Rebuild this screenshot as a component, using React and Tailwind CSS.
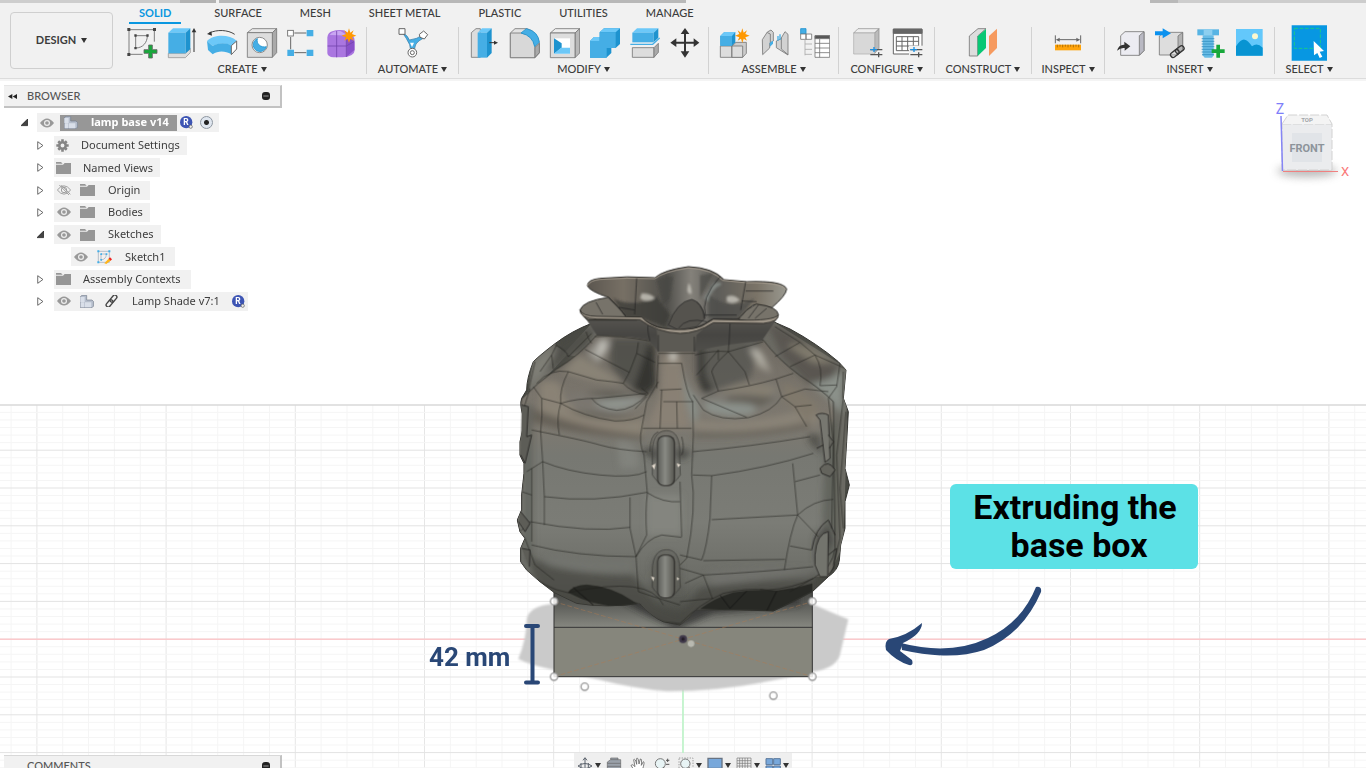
import { useState } from 'react';

const BLUE = '#45aee5';
const DEEP = '#1e93cf';
const EDGE = '#666666';

const Plus = ({ x, y }) => (
  <path d={`M${x} ${y}h11v14h14v11h-14v14h-11v-14h-14v-11h14z`} fill="#17a83b" />
);

const Spark = ({ x, y }) => (
  <path
    transform={`translate(${x} ${y})`}
    d="M0-22 4-9 14-16 9-5 22 0 9 5 14 15 4 9 0 22-4 9-14 15-9 5-22 0-9-5-14-16-4-9z"
    fill="#ff9800"
  />
);

const Sliders = ({ x, y }) => (
  <g transform={`translate(${x} ${y})`} fill="none" strokeWidth="4">
    <path d="M0 8h36M0 23h36M25 16v15" stroke="#555" />
    <path d="M0 8h20M11 0v15" stroke="#1b8fe0" />
  </g>
);

const groups = [
  {
    name: 'CREATE',
    size: 'px-2',
    tools: [
      ['Create Sketch', '378 81 96 96', (
        <g fill="none" stroke={EDGE} strokeWidth="2.5">
          <path d="M387 89H463V125M387 89V163H428" />
          <path d="M407 107h35M407 107v37M442 107c0 20-13 37-35 37" />
          <path d="M382 84h9v9h-9zM459 84h9v9h-9zM382 159h9v9h-9zM403 103h7v7h-7zM439 103h7v7h-7zM403 141h7v7h-7z" fill="#444" stroke="none" />
          <Plus x={446} y={135} />
        </g>
      )],
      ['Extrude', '498 81 96 96', (
        <g>
          <path d="M505 160h51l15-14v12l-15 15h-51z" fill="#ddd" stroke="#888" strokeWidth="2" />
          <path d="M505 98 519 85H571L557 98z" fill="#6cc8f8" />
          <path d="M505 98H557V160H505z" fill={BLUE} />
          <path d="M557 98 571 85V147L557 160z" fill={DEEP} />
          <path d="M582 156V92" stroke="#333" strokeWidth="3" />
          <path d="M582 84l7 13h-14z" fill="#333" />
        </g>
      )],
      ['Revolve', '618 81 96 96', (
        <g>
          <path d="M628 99C650 88 684 89 704 103" stroke="#444" strokeWidth="3" fill="none" />
          <path d="M621 102l13-8 2 13z" fill="#333" />
          <path d="M621 123C641 102 688 102 710 122L696 137C676 128 656 128 638 138z" fill="#6cc8f8" />
          <path d="M621 123 638 138V163L624 150zM638 138C656 127 680 128 694 137V163C675 152 654 152 638 163z" fill={BLUE} />
          <path d="M694 137 710 123V147L694 164z" fill="#fff" stroke={EDGE} strokeWidth="3" />
        </g>
      )],
      ['Hole', '738 81 96 96', (
        <g stroke="#777" strokeWidth="2.5" strokeLinejoin="round">
          <path d="M742 98 757 86H830L817 98z" fill="#e8e8e8" />
          <path d="M817 98 830 86V158L817 172z" fill="#aaa" />
          <path d="M742 98H817V172H742z" fill="#ddd" />
          <circle cx="779" cy="135" r="23" fill="#fff" />
          <path d="M772 116a20 20 0 1 0 27 24c-16 4-31-8-27-24z" fill={BLUE} stroke={DEEP} />
        </g>
      )],
      ['Pattern', '858 81 96 96', (
        <g>
          <path d="M883 99h36M872 111v37M883 158h36" stroke={EDGE} strokeWidth="3" />
          <rect x="863" y="91" width="17" height="17" fill="#fff" stroke={EDGE} strokeWidth="2.5" />
          <path d="M920 90h20v19h-20zM862 149h20v19h-20zM920 149h20v19h-20z" fill={BLUE} />
        </g>
      )],
      ['Create Form', '978 81 96 96', (
        <g>
          <path d="M982 112q2-15 15-18 15-6 35-3l27 18q6 5 5 14v28q0 9-9 14-12 7-27 7h-28q-16-1-18-12z" fill="#aa76e0" />
          <path d="M989 105q10-14 32-12l25 14q-28-2-57-2z" fill="#c9a6f2" />
          <path d="M1040 110q18 5 23 15v25l-23 20z" fill="#8950c9" />
          <path d="M1010 93v79M1039 108v63M983 138h56l23-13" stroke="#7544ad" strokeWidth="2.5" fill="none" />
          <Spark x={1047} y={107} />
        </g>
      )],
    ],
  },
  {
    name: 'AUTOMATE',
    size: 'w-[92px]',
    tools: [
      ['Automated Modeling', '1188 81 96 96', (
        <g>
          <path d="M1203 96Q1222 108 1225 120 1248 118 1268 103L1273 111Q1250 123 1245 132 1239 142 1242 160H1226Q1230 146 1226 134 1217 115 1203 96z" fill={BLUE} stroke="#3279a5" strokeWidth="2" />
          <path d="M1227 128h12l-6 13z" fill="#fff" />
          <path d="M1194 86h18v17h-18zM1255 103l13-10 12 11-10 13-13-5z" fill="#fff" stroke={EDGE} strokeWidth="3" />
          <circle cx="1234" cy="158" r="13" fill="#fff" stroke={EDGE} strokeWidth="3" />
          <circle cx="1234" cy="158" r="6" fill="#fff" stroke={EDGE} strokeWidth="3" />
        </g>
      )],
    ],
  },
  {
    name: 'MODIFY',
    size: 'w-[250px]',
    tools: [
      ['Press Pull', '36 81 96 96', (
        <g>
          <path d="M46 98 60 86H73V172H46z" fill="#ddd" stroke="#777" strokeWidth="2.5" />
          <path d="M65 98 78 85H107L93 98z" fill="#6cc8f8" />
          <path d="M65 98H93V173H65z" fill={BLUE} />
          <path d="M93 98 107 85V159L93 173z" fill={DEEP} />
          <path d="M100 128h17" stroke="#333" strokeWidth="3" />
          <path d="M126 128l-12-6v12z" fill="#333" />
        </g>
      )],
      ['Fillet', '156 81 96 96', (
        <g stroke="#777" strokeWidth="2.5" strokeLinejoin="round">
          <path d="M163 99 177 86H213Q247 95 251 135V158L237 173H163z" fill="#e3e3e3" />
          <path d="M163 99h32Q233 104 237 140v33h-74z" fill="#d8d8d8" />
          <path d="M195 99 211 86Q247 94 250 127L236 140Q230 107 195 99z" fill={BLUE} stroke={DEEP} />
          <path d="M237 142l13-12v28l-13 14z" fill="#a9a9a9" />
        </g>
      )],
      ['Shell', '276 81 96 96', (
        <g stroke="#777" strokeWidth="2.5" strokeLinejoin="round">
          <path d="M283 99 298 86H371L357 99z" fill="#eee" />
          <path d="M357 99 371 86V159L357 173z" fill="#b8b8b8" />
          <path d="M283 99H357V173H283z" fill="#ddd" />
          <path d="M294 115H342V161H294z" fill="#fff" stroke="none" />
          <path d="M294 115 317 130V143L294 161z" fill={DEEP} stroke="none" />
          <path d="M294 161 315 143H342V161z" fill="#6cc8f8" stroke="none" />
        </g>
      )],
      ['Combine', '396 81 96 96', (
        <g>
          <path d="M402 123 414 111H431V97L444 85H492V132L479 144H466V159L451 173H402z" fill={DEEP} />
          <path d="M431 97 444 85H492L479 97zM402 123 414 111H431V123z" fill="#6cc8f8" />
          <path d="M431 97H479V144H452V173H402V123H431z" fill={BLUE} />
        </g>
      )],
      ['Split Body', '516 81 96 96', (
        <g>
          <path d="M529 98 543 85H607L593 98z" fill="#6cc8f8" />
          <path d="M529 98H593V127H529z" fill={BLUE} />
          <path d="M593 98 607 85V113L593 127z" fill={DEEP} />
          <path d="M523 133H590L611 114" stroke={BLUE} strokeWidth="4" fill="none" />
          <path d="M529 143H594V172H529z" fill="#ddd" stroke="#777" strokeWidth="2.5" />
          <path d="M594 143 607 130V157L594 172z" fill="#aaa" stroke="#777" strokeWidth="2.5" />
        </g>
      )],
      ['Move', '636 81 96 96', (
        <path d="M687 84 700 102H690V125H713V115L730 128 713 141V131H690V154H700L687 173 674 154H684V131H661V141L643 128 661 115V125H684V102H674z" fill="#333" />
      )],
    ],
  },
  {
    name: 'ASSEMBLE',
    size: 'w-[130px]',
    tools: [
      ['New Component', '786 81 96 96', (
        <g stroke="#777" strokeWidth="2.5" strokeLinejoin="round">
          <path d="M793 138H828V172H793z" fill="#ddd" />
          <path d="M828 138 840 127H871V160L860 172H828z" fill="#ccc" />
          <path d="M828 138H860V172H828z" fill="#ddd" />
          <path d="M793 108 805 96H838V127L828 137H793z" fill={DEEP} stroke="none" />
          <path d="M793 108 805 96H838L828 108z" fill="#6cc8f8" stroke="none" />
          <path d="M793 108H828V137H793z" fill={BLUE} stroke="none" />
          <g stroke="none"><Spark x={859} y={107} /></g>
        </g>
      )],
      ['Joint', '906 81 96 96', (
        <g stroke="#777" strokeWidth="2.5" strokeLinejoin="round">
          <path d="M919 119 934 96 945 90 952 97V123L941 130V144L920 164z" fill="#d2d2d2" />
          <path d="M934 98 943 102V130" fill="none" />
          <path d="M941 128l10-6v9l-9 9z" fill={BLUE} stroke="none" />
          <path d="M961 123 974 117 987 95 996 103V165L961 143z" fill="#d2d2d2" />
          <path d="M976 114v33l20 17" fill="none" />
          <path d="M966 108v14M972 103v17" stroke={BLUE} strokeWidth="4" />
        </g>
      )],
      ['Bill of Materials', '1026 81 96 96', (
        <g stroke="#777" strokeWidth="2.5">
          <path d="M1034 86h16v16h-16z" fill={BLUE} stroke={DEEP} />
          <path d="M1034 102h16v16h-16zM1050 102h17v16h-17z" fill="#fff" />
          <path d="M1047 118v48M1047 132h21M1047 148h21M1047 163h21" fill="none" stroke="#aaa" />
          <path d="M1077 107h44v65h-44z" fill="#fff" />
          <path d="M1077 107h44v9h-44z" fill="#555" />
          <path d="M1091 116v56M1077 130h44M1077 144h44M1077 158h44" />
        </g>
      )],
    ],
  },
  {
    name: 'CONFIGURE',
    size: 'w-[96px]',
    tools: [
      ['Configure', '1185 81 96 96', (
        <g strokeWidth="2" strokeLinejoin="round">
          <path d="M1193 99 1206 86H1269L1256 99z" fill="#eee" stroke="#888" />
          <path d="M1256 99 1269 86V145L1256 160z" fill="#bbb" stroke="#888" />
          <path d="M1193 99H1256V162H1193z" fill="#d8d8d8" stroke="#aaa" />
          <Sliders x={1243} y={141} />
        </g>
      )],
      ['Configuration Table', '1305 81 96 96', (
        <g stroke={EDGE} strokeWidth="3">
          <path d="M1312 88h86v74h-86z" fill="#fff" />
          <path d="M1312 87h86v13h-86z" fill={EDGE} />
          <path d="M1321 110h67v42h-67zM1321 124h67M1321 138h67M1338 110v42M1355 110v42M1372 110v42" fill="none" />
          <path d="M1359 137h42v40h-42z" fill="#f1f1f1" stroke="none" />
          <Sliders x={1363} y={141} />
        </g>
      )],
    ],
  },
  {
    name: 'CONSTRUCT',
    size: 'w-[97px]',
    tools: [
      ['Offset Plane', '171 81 96 96', (
        <g>
          <path d="M178 108 204 86H228L203 108V168H178z" fill="#ddd" stroke="#777" strokeWidth="2.5" />
          <path d="M203 109 228 87V144L203 168z" fill="#08c774" />
          <path d="M237 108 261 86V144L237 168z" fill="#f69a5f" />
        </g>
      )],
    ],
  },
  {
    name: 'INSPECT',
    size: 'w-[73px]',
    tools: [
      ['Measure', '426 81 96 96', (
        <g>
          <path d="M436 106v24M512 106v24M440 119h68" stroke={EDGE} strokeWidth="3" />
          <path d="M438 119l11-6v12zM510 119l-11-6v12z" fill={EDGE} />
          <path d="M435 134h78v17h-78z" fill="#ffa40b" />
          <path d="M442 134v8M450 134v6M458 134v8M466 134v6M474 134v8M482 134v6M490 134v8M498 134v6M506 134v8" stroke="#865500" strokeWidth="2" />
        </g>
      )],
    ],
  },
  {
    name: 'INSERT',
    size: 'w-[170px]',
    tools: [
      ['Insert Derive', '612 81 96 96', (
        <g stroke="#777" strokeWidth="2.5" strokeLinejoin="round">
          <path d="M632 107 645 95H702V152L688 166H632z" fill="#ececf2" />
          <path d="M688 107 702 95V152L688 166z" fill="#b9b9c3" />
          <path d="M621 152Q626 133 643 134V125L661 139 644 152V144Q632 142 621 152z" fill="#333" stroke="none" />
        </g>
      )],
      ['Insert Component', '732 81 96 96', (
        <g stroke="#777" strokeWidth="2.5" strokeLinejoin="round">
          <path d="M748 108 762 97H818V148L804 165H748z" fill="#ddd" />
          <path d="M804 108 818 97V148L804 165z" fill="#b3b3b3" />
          <path d="M735 94H758V85L783 100 758 115V106H735z" fill="#0a91ef" stroke="none" />
          <g fill="none" stroke="#333" strokeWidth="4" transform="rotate(-38 802 154)">
            <rect x="778" y="147" width="28" height="15" rx="7" />
            <rect x="797" y="147" width="28" height="15" rx="7" />
          </g>
        </g>
      )],
      ['Insert Fastener', '852 81 96 96', (
        <g>
          <path d="M862 88h65v18h-65z" fill="#57b4e4" />
          <path d="M881 88h26v18h-26z" fill="#8ccff0" />
          <path d="M878 106h33v60l-5 7h-22l-6-7z" fill="#68bce6" />
          <path d="M875 116h38M875 124h38M875 132h38M875 140h38M875 148h38M875 156h38M876 164h36" stroke="#328fc0" strokeWidth="2.5" />
          <Plus x={919} y={134} />
        </g>
      )],
      ['Canvas', '972 81 96 96', (
        <g>
          <path d="M978 87h80v80h-80z" fill="#63c8fb" />
          <circle cx="1035" cy="109" r="9" fill="#fdf8ce" />
          <path d="M978 139Q992 117 1004 119 1013 120 1026 139 1041 126 1058 143V167H978z" fill="#0894d2" />
        </g>
      )],
    ],
  },
];

const SelectIcon = (
  <g>
    <path d="M1145 76h106v106h-106z" fill="#0797e2" />
    <path d="M1153 85h78v60h-78z" fill="none" stroke="#17c98c" strokeWidth="3" strokeDasharray="11 5" />
    <path d="M1211 123 1242 153 1229 155 1237 170 1229 174 1222 159 1212 166z" fill="#fff" />
  </g>
);

const Caret = ({ className = 'ml-[3px]' }) => (
  <svg viewBox="0 0 6 5" className={`inline-block w-[6px] h-[5px] shrink-0 ${className}`} aria-hidden="true">
    <path d="M0 0H6L3 5z" fill="#333" />
  </svg>
);

function ToolGroup({ name, size, tools }) {
  return (
    <div className={`${size} h-[47px] shrink-0 flex flex-col items-center border-r border-[#d2d2d2] box-border`}>
      <div className="flex gap-2 h-8">
        {tools.map(([label, box, art]) => (
          <button key={label} type="button" aria-label={label} className="w-8 h-8">
            <svg viewBox={box} className="w-8 h-8">{art}</svg>
          </button>
        ))}
      </div>
      <button type="button" className="mt-[2px] h-4 flex items-center whitespace-nowrap text-[11px] leading-4">
        {name}
        <Caret />
      </button>
    </div>
  );
}

function Toolbar() {
  const [tab, setTab] = useState('SOLID');
  const tabs = ['SOLID', 'SURFACE', 'MESH', 'SHEET METAL', 'PLASTIC', 'UTILITIES', 'MANAGE'];
  return (
    <header className="relative z-10 bg-[#f1f1f1] border-b-2 border-[#f4f4f4] text-[#3c3c3c] font-[Lato,'Open_Sans',sans-serif] font-medium">
      <div className="flex h-[3px]">
        <div className="w-[180px] bg-[#cdcdcd]" />
        <div className="w-9 bg-[#b3b3b3] mr-[3px]" />
        <div className="w-[467px] bg-[#b8b8b8]" />
        <div className="w-[464px]" />
        <div className="w-7 bg-[#b9b9b9]" />
        <div className="flex-1 bg-[#cdcdcd]" />
      </div>
      <div className="flex h-[76px] border-b border-[#dcdcdc]">
        <button
          type="button"
          className="ml-[10px] mt-[9px] w-[103px] h-[57px] shrink-0 rounded border border-[#cfcfcf] text-[11px] font-bold flex items-center justify-center gap-[2px]"
        >
          DESIGN
          <Caret />
        </button>
        <div className="flex-1 ml-[5px]">
          <nav className="flex gap-[38px] ml-[21px] h-[22px] text-[11px]">
            {tabs.map((t) => (
              <button
                key={t}
                type="button"
                onClick={() => setTab(t)}
                className={
                  t === tab
                    ? 'relative mr-[5px] text-[#0a97e0] font-bold h-[21px] after:absolute after:-left-[10px] after:-right-[10px] after:bottom-0 after:h-[2px] after:bg-[#0a97e0]'
                    : 'h-[21px] whitespace-nowrap'
                }
              >
                {t}
              </button>
            ))}
          </nav>
          <div className="flex mt-[2px]">
            {groups.map((g) => (
              <ToolGroup key={g.name} {...g} />
            ))}
            <div className="w-[68px] h-[47px] shrink-0 flex flex-col items-center">
              <button type="button" aria-label="Select" className="w-9 h-9 -my-[2px] shrink-0">
                <svg viewBox="1143 75 108 108" className="w-9 h-9">{SelectIcon}</svg>
              </button>
              <button type="button" className="mt-[2px] h-4 flex items-center text-[11px] leading-4">
                SELECT
                <Caret />
              </button>
            </div>
          </div>
        </div>
      </div>
    </header>
  );
}

const Eye = ({ off }) => (
  <svg viewBox="0 0 42 30" className="w-[14px] h-[10px] shrink-0" aria-hidden="true">
    {off ? (
      <g fill="none" stroke="#a0a0a0" strokeWidth="3">
        <path d="M1 15Q21-10 41 15 21 40 1 15z" />
        <circle cx="21" cy="15" r="8" />
        <path d="M7 0 36 30M13 0 40 28" />
      </g>
    ) : (
      <g>
        <path d="M0 15Q21-12 42 15 21 42 0 15z" fill="#999" />
        <circle cx="21" cy="15" r="9" fill="#eee" />
        <circle cx="21" cy="15" r="5.5" fill="#999" />
      </g>
    )}
  </svg>
);

const Folder = () => (
  <svg viewBox="0 0 45 36" className="w-[15px] h-3 shrink-0" aria-hidden="true">
    <path d="M0 0H15L20 5H0zM0 8H21L26 3H45V36H0z" fill="#969696" />
  </svg>
);

const Gear = () => (
  <svg viewBox="-20 -20 40 40" className="w-[13px] h-[13px] shrink-0" aria-hidden="true">
    <circle r="10" fill="none" stroke="#858585" strokeWidth="8" />
    <path d="M0-19V-12M0 12V19M-19 0H-12M12 0H19M-13-13-9-9M9 9 13 13M-13 13-9 9M9-9 13-13" stroke="#858585" strokeWidth="8" />
  </svg>
);

const Component = () => (
  <svg viewBox="0 0 42 39" className="w-[14px] h-[13px] shrink-0" aria-hidden="true">
    <path d="M1 5 6 1H20V15H36L41 20V33L36 38H1z" fill="#b5bdcb" stroke="#747d8c" strokeWidth="2" />
    <path d="M1 6H14V21H1zM15 22H34V37H15zM2 22H13V37H2z" fill="#d9dfe9" />
  </svg>
);

const Link = () => (
  <svg viewBox="0 0 38 34" className="w-[13px] h-[12px] shrink-0 mx-[2px]" aria-hidden="true">
    <g fill="none" stroke="#444" strokeWidth="4" transform="rotate(-50 19 17)">
      <rect x="-2" y="11" width="24" height="12" rx="6" />
      <rect x="16" y="11" width="24" height="12" rx="6" />
    </g>
  </svg>
);

const SketchIcon = () => (
  <svg viewBox="0 0 45 42" className="w-[15px] h-[14px] shrink-0" aria-hidden="true">
    <path d="M4 4H37V37H4zM12 12H28M12 12V30Q28 28 28 12" fill="none" stroke="#96a4b5" strokeWidth="2" />
    <path d="M1 1h6v6H1zM34 1h6v6h-6zM1 34h6v6H1zM10 10h5v5h-5zM26 10h5v5h-5zM10 27h5v5h-5z" fill="#42afe9" />
    <path d="M22 40 36 25 42 31 28 42z" fill="#ffb51b" />
    <path d="M35 26 39 22 45 28 41 32z" fill="#e22" />
  </svg>
);

const Release = () => (
  <svg viewBox="0 0 40 40" className="w-[13px] h-[13px] shrink-0" aria-hidden="true">
    <circle cx="19" cy="19" r="19" fill="#3d55b4" />
    <text x="18" y="28" fontSize="26" fontWeight="700" textAnchor="middle" fill="#fff" fontFamily="Roboto, sans-serif">R</text>
    <circle cx="33" cy="33" r="5" fill="#eee" stroke="#555" strokeWidth="2" />
  </svg>
);

const Expander = ({ open }) => (
  <button type="button" aria-label={open ? 'Collapse' : 'Expand'} className="w-2 h-[19px] flex items-center justify-center shrink-0">
    <svg viewBox="0 0 20 26" className="w-[7px] h-[9px]">
      {open ? (
        <path d="M19 3V22H0z" fill="#444" stroke="#111" strokeWidth="2" />
      ) : (
        <path d="M2 2 17 13 2 24z" fill="#fff" stroke="#555" strokeWidth="2.5" />
      )}
    </svg>
  </button>
);

const rows = [
  { name: 'Document Settings', icons: <Gear />, pad: 'gap-3 pl-[2px] pr-[7px]' },
  { name: 'Named Views', icons: <Folder />, pad: 'gap-3 pl-[2px] pr-[7px]' },
  { name: 'Origin', eye: 'off', icons: <Folder />, pad: 'gap-[13px] pl-[3px] pr-[10px]' },
  { name: 'Bodies', eye: 'on', icons: <Folder />, pad: 'gap-[13px] pl-[3px] pr-[7px]' },
  { name: 'Sketches', eye: 'on', icons: <Folder />, pad: 'gap-[13px] pl-[3px] pr-[7px]', open: true },
  { name: 'Sketch1', eye: 'on', icons: <SketchIcon />, pad: 'gap-[13px] pl-[3px] pr-[10px]', leaf: true },
  { name: 'Assembly Contexts', icons: <Folder />, pad: 'gap-3 pl-[2px] pr-[10px]' },
  { name: 'Lamp Shade v7:1', eye: 'on', icons: <><Component /><Link /></>, pad: 'gap-3 pl-[3px] pr-[3px]', release: true },
];

function Browser() {
  return (
    <aside className="ml-1 mt-1 w-[278px] text-[11px] text-[#3d3d3d] font-['Noto_Sans','Open_Sans',sans-serif]">
      <div className="h-[23px] bg-[#f1f1f1] border-r-2 border-b-2 border-t border-t-[#e6e6e6] border-[#c2c2c2] flex items-center pl-1 pr-[10px] text-[#555]">
        <button type="button" aria-label="Collapse panel" className="mr-[10px]">
          <svg viewBox="0 0 27 15" className="w-[9px] h-[5px]">
            <path d="M13 0V15L0 7.5zM27 0V15L14 7.5z" fill="#222" />
          </svg>
        </button>
        <span className="flex-1 font-[Lato,sans-serif] font-medium">BROWSER</span>
        <Minus />
      </div>

      <div className="mt-[5px] ml-4 flex items-center gap-[9px]">
        <Expander open />
        <div className="h-[19px] bg-[#f1f1f1] flex items-center pl-[3px] pr-[6px]">
          <Eye />
          <div className="ml-[6px] mr-[3px] h-4 bg-[#979797] text-white font-bold flex items-center pl-1 pr-2 gap-[13px]">
            <Component />
            <span>lamp base v14</span>
          </div>
          <Release />
          <input
            type="radio"
            defaultChecked
            aria-label="Activate lamp base v14"
            className="appearance-none ml-[7px] w-[13px] h-[13px] rounded-full border border-[#8b949f] bg-[radial-gradient(circle,#222_0_2px,#dfe6ef_3px)]"
          />
        </div>
      </div>

      <ul className="mt-1 ml-8 h-[175px] flex flex-col justify-between">
        {rows.map((row) => (
          <li key={row.name} className="flex items-center gap-[10px]">
            {row.leaf ? <span className="w-[25px]" /> : <Expander open={row.open} />}
            <div className={`h-[19px] bg-[#f1f1f1] flex items-center whitespace-nowrap ${row.pad}`}>
              <div className="flex items-center gap-[9px]">
                {row.eye && <Eye off={row.eye === 'off'} />}
                {row.icons}
              </div>
              <span>{row.name}</span>
              {row.release && <Release />}
            </div>
          </li>
        ))}
      </ul>
    </aside>
  );
}

const Minus = () => (
  <button type="button" aria-label="Panel options" className="flex items-center">
    <svg viewBox="0 0 24 24" className="w-2 h-2">
      <rect width="24" height="24" rx="9" fill="#222" />
      <path d="M4 12H20" stroke="#999" strokeWidth="3" />
    </svg>
  </button>
);

// Horizontal and vertical lines of the ground plane
const xs = Array.from({ length: 54 }, (_, i) => ({ at: 36.9 + (i - 1) * 25.84, major: (i - 1) % 5 === 0 }));
const ys = Array.from({ length: 48 }, (_, i) => ({ at: 412.4 + i * 7.56, major: i > 0 && i % 5 === 0 }));

function Ground() {
  return (
    <g>
      {xs.map((l) => (
        <path key={l.at} d={`M${l.at} 405V768`} stroke={l.major ? '#e6e6e6' : '#f5f5f5'} />
      ))}
      {ys.map((l) => (
        <path key={l.at} d={`M0 ${l.at}H1366`} stroke={l.major ? '#e3e3e3' : '#f5f5f5'} />
      ))}
      <path d="M0 405H1366" stroke="#d8d8d8" strokeWidth="1.5" />
      <path d="M0 639.3H1366" stroke="#fbc9cc" strokeWidth="1.5" />
      <path d="M683 676V768" stroke="#b9f5c4" strokeWidth="1.5" />
    </g>
  );
}

const BODY =
  'M275 205Q215 228 165 266 120 300 100 320 80 370 80 405L65 430Q58 450 70 485L68 525 60 560V600L72 625V655L65 720V765L52 795 60 830 75 850 62 880V920L80 945 120 980 162 1012 230 1045Q320 1060 420 1045 455 1085 490 1100L540 1110Q570 1090 585 1065 700 1062 820 1068L880 1040 937 1010 985 965Q1015 945 1018 915L1022 870 1035 820V740L1048 690 1035 640 1040 560 1045 470 1030 430 1038 345 1015 320Q950 265 870 222L820 200z';

const FRONT =
  'M290 240Q240 300 170 342 110 385 65 432 60 455 70 485L68 525 60 560V600L72 625V655L65 720V765L52 795 60 830 75 850 62 880V920L80 945Q130 1000 205 1013 215 993 260 990 335 995 400 1040 450 1085 490 1100L540 1106Q600 1045 670 1015 740 998 800 1005 880 1000 940 970 1000 935 1005 880L1000 440Q960 400 900 362 830 310 790 255z';

// Soft light and dark areas of the bag: [shape, colour, opacity]
const shades = [
  ['M170 265Q230 225 285 215L265 270 170 340 130 350z', '#4b4a45', 0.8],
  ['M100 325Q130 295 170 275L150 330 90 395z', '#83827a', 0.8],
  ['M800 205Q880 230 935 275L1010 330 990 390 930 390 850 310z', '#55534c', 0.8],
  ['M860 270Q920 255 1000 325L940 325z', '#8b8475', 0.8],
  ['M930 385Q990 380 1030 345L1025 480 985 430z', '#8b918a', 1],
  ['M330 250H455L465 390Q440 420 400 405L370 380 330 330z', '#4c4c48', 0.85],
  ['M600 235H785L770 300 750 370 680 395 620 420 595 370z', '#555551', 0.8],
  ['M445 270 465 260 470 390 440 425 400 405z', '#2c2d2a', 0.75],
  ['M590 265 612 280 615 360 640 410 615 430 592 370z', '#2c2d2a', 0.75],
  ['M235 300Q310 340 365 385 280 385 190 350z', '#928a7c', 0.7],
  ['M300 250Q335 245 330 270L295 325 262 295z', '#a3a19a', 0.9],
  ['M745 280Q770 270 790 300L815 355 775 335z', '#aaa69b', 0.8],
  ['M304 258Q320 260 312 290L294 312z', '#dad8d1', 0.8],
  ['M757 285Q770 282 780 300L800 340z', '#dad8d1', 0.7],
  ['M120 385Q190 360 190 430L290 480 430 490 430 545 270 530 120 470z', '#8c8477', 0.9],
  ['M190 425Q280 405 370 400L440 425Q370 495 300 490 230 480 190 425z', '#7a7770', 0.9],
  ['M250 415Q340 400 410 418L330 430z', '#55524a', 0.7],
  ['M280 440Q340 430 435 430 400 462 345 465 300 462 280 440z', '#979e98', 0.75],
  ['M200 465Q290 505 430 490', '#5b5951', 0.8],
  ['M660 405Q740 375 830 385L840 430Q790 485 690 490 600 480 590 420z', '#7b7972', 0.9],
  ['M610 440Q670 445 740 448 780 455 760 475 690 490 620 470z', '#8f9691', 0.85],
  ['M680 402Q780 372 835 402L800 425Q750 412 650 415z', '#8a8172', 0.75],
  ['M680 425Q760 415 830 430L780 455Q740 440 680 440z', '#57534a', 0.6],
  ['M485 300H545L555 430 570 520H440L480 420z', '#8b8275', 0.9],
  ['M545 325Q560 400 590 425L600 470 580 520 555 430z', '#8b918c', 0.8],
  ['M512 290h14v25h-14z', '#f0eee6', 0.9],
  ['M580 495Q750 515 920 460L960 480 940 515Q750 535 580 525z', '#8b8478', 0.9],
  ['M850 380Q920 410 960 460L920 500 850 430z', '#81796c', 0.9],
  ['M100 460Q240 520 430 540L430 552Q220 540 95 500z', '#5a554c', 0.65],
  ['M580 530Q760 540 930 500V518Q760 553 580 546z', '#5a554c', 0.6],
  ['M350 560Q400 550 415 600L415 640 360 640z', '#8c8e88', 0.5],
  ['M440 720H545V840H440z', '#8a8c85', 0.6],
  ['M70 450H98V920H70z', '#5d5e58', 0.7],
  ['M975 500H1010V920H965z', '#5a5b56', 0.7],
  ['M80 900Q180 960 400 960L470 1050 540 1080 600 1000 950 950V1030L540 1130 120 1020z', '#4a4b46', 0.8],
  ['M150 900Q300 925 400 915V945Q260 960 140 930z', '#74756f', 0.7],
  ['M620 950Q800 930 940 945V970Q800 975 640 990z', '#74756f', 0.6],
  ['M430 580H475V620L430 595zM525 580 575 588 555 612 525 610z', '#3c3a36', 0.7],
  ['M455 920Q495 870 540 920L550 1010H450z', '#55554f', 0.5],
  ['M925 535 960 540 965 600 925 560zM945 840 985 810 1000 860 945 930z', '#3b3b37', 0.6],
];

const seams =
  'M285 245Q360 240 450 258L475 270M255 283Q325 320 388 352L370 385Q340 380 290 375L205 350Q150 340 110 385M388 352 410 295 415 262M410 295 465 322M370 385Q390 410 440 420M205 350Q178 400 182 445L125 430 100 395M182 445Q230 430 290 430L440 415M182 445Q250 485 345 498 400 498 432 480M275 430Q295 460 350 466 400 465 445 415L425 400M405 462 440 425M182 445Q168 490 178 540M125 430Q128 480 122 530M95 525Q250 555 300 570T440 590' +
  'M475 295H585M475 325H545M585 300Q640 285 685 290L790 260M685 290 690 205M685 290 735 350 748 390M685 290Q640 330 635 350L655 408 605 430M590 360 625 320 655 285V315M655 408Q750 395 828 372L845 425 915 402 985 410M845 425Q820 470 745 488 660 500 610 465L580 420M605 430 740 487M845 425 885 455 920 515M885 455 935 450M828 372 880 355' +
  'M480 405 545 402M485 405 480 520M490 440H580M530 440 532 520M428 520H575M475 380 440 440 425 520Q415 560 432 600L442 715Q435 770 440 840L408 905 415 1010M545 325Q560 420 578 440L580 540 575 660Q590 760 560 910L540 930M475 300 470 400M545 545Q555 580 545 600M450 590Q450 540 475 530' +
  'M122 530 128 620 133 725V810M80 650 128 620Q200 650 300 660T440 650M133 725Q280 745 440 712M390 727V820L408 905M90 800Q270 835 390 817M95 870Q230 905 408 905M95 640 95 860M65 710 95 720M60 830 90 800M75 850 105 930 162 975M440 712Q490 745 540 740M540 680 545 845M408 905Q440 850 485 840L545 847' +
  'M578 590Q750 575 930 545M578 660 635 662Q800 640 940 595M635 662 630 790Q620 880 605 915M635 794 893 780 878 625M893 780Q940 735 1000 733M885 680 960 660M893 780 955 845M893 780Q870 830 853 945M870 873 935 885M610 917 855 913M605 915 540 900M610 960Q800 950 940 935M610 960 637 1030M555 985 610 960 540 940M205 1013Q450 960 490 1050M540 1040 640 1030M415 1010 460 1025 540 1050' +
  'M205 1013 222 1000 220 995M222 1000 280 1050M880 1000 830 1008 780 1003M940 970 870 1010' +
  'M170 270 155 300 120 350M165 270Q200 285 205 305L275 235M258 230Q265 255 275 265M155 300 160 342M825 215 900 262 945 300 1035 340M900 262 825 305M945 300 870 335M945 300Q970 340 960 392M1020 325 1010 395 985 430M1030 430 1010 600 1020 850 1000 930M985 430 1000 560 995 820M1038 470 1020 700 1030 820M85 410 105 320M90 400 70 465M1030 350 1028 430M960 392 1010 390';

function Loop({ x, y, h }) {
  return (
    <g>
      <path
        d={`M${x - 16} ${y + 60}Q${x - 20} ${y - 16} ${x + 25} ${y - 18}T${x + 66} ${y + 60}L${x + 68} ${y + h - 30}Q${x + 25} ${y + h + 34} ${x - 16} ${y + h - 30}z`}
        fill="#5d5c57"
        fillOpacity="0.25"
        stroke="#33322f"
        strokeWidth="1.8"
      />
      <rect x={x - 2} y={y - 3} width="54" height={h + 6} rx="20" fill="#343330" />
      <rect x={x + 1} y={y} width="47" height={h} rx="18" fill="url(#loop)" />
    </g>
  );
}

function Bag() {
  return (
    <g transform="translate(500 255) scale(0.33333)">
      <defs>
        <linearGradient id="bag" x1="0" y1="0" x2="0" y2="1">
          <stop offset="0" stopColor="#716c64" />
          <stop offset="0.3" stopColor="#7e7970" />
          <stop offset="0.42" stopColor="#777872" />
          <stop offset="0.65" stopColor="#7b7c76" />
          <stop offset="0.85" stopColor="#6b6c66" />
          <stop offset="1" stopColor="#41423d" />
        </linearGradient>
        <linearGradient id="rim" x1="0" y1="0" x2="1" y2="0">
          <stop offset="0" stopColor="#5c5750" />
          <stop offset="0.18" stopColor="#777065" />
          <stop offset="0.4" stopColor="#51504c" />
          <stop offset="0.52" stopColor="#85827b" />
          <stop offset="0.65" stopColor="#5e5d59" />
          <stop offset="0.85" stopColor="#7b7468" />
          <stop offset="1" stopColor="#9a9990" />
        </linearGradient>
        <linearGradient id="neck" x1="0" y1="0" x2="0" y2="1">
          <stop offset="0" stopColor="#5d5b56" />
          <stop offset="0.6" stopColor="#474643" />
          <stop offset="1" stopColor="#504f4b" />
        </linearGradient>
        <linearGradient id="loop" x1="0" y1="0" x2="1" y2="0">
          <stop offset="0" stopColor="#5f605b" />
          <stop offset="0.45" stopColor="#898a84" />
          <stop offset="1" stopColor="#5b5b55" />
        </linearGradient>
        <linearGradient id="boxTop" x1="0" y1="0" x2="0" y2="1">
          <stop offset="0" stopColor="#454643" />
          <stop offset="1" stopColor="#868780" />
        </linearGradient>
        <filter id="soft" x="-30%" y="-30%" width="160%" height="160%">
          <feGaussianBlur stdDeviation="10" />
        </filter>
        <filter id="edge"><feGaussianBlur stdDeviation="3" /></filter>
        <clipPath id="inBody"><path d={BODY} /></clipPath>
        <clipPath id="inTop"><path d="M162 1010H937V1117H162z" /></clipPath>
      </defs>

      {/* shadow on the ground */}
      <path d="M80 1095Q85 1052 162 1047H937Q1000 1075 1045 1093L1022 1190Q1015 1240 937 1250 700 1310 500 1309 400 1300 300 1275L162 1245Q90 1230 55 1212 80 1150 80 1095z" fill="#cacaca" filter="url(#edge)" />

      {/* base box */}
      <path d="M162 1010H937V1117H162z" fill="url(#boxTop)" />
      <g clipPath="url(#inTop)" filter="url(#soft)">
        <path d="M350 1030 450 1085 530 1125 640 1075 900 1050 900 1000H300z" fill="#2c2d2b" opacity="0.75" />
      </g>
      <path d="M162 1117H937V1265H162z" fill="#86867c" />
      <path d="M162 1010V1265H937V1010M162 1117H937" fill="none" stroke="#333" strokeWidth="3" />
      <path d="M162 1040 937 1265M162 1265 937 1040" stroke="#b07a50" strokeWidth="2" strokeDasharray="14 7" opacity="0.7" />

      {/* bag body */}
      <path d={BODY} fill="#484943" stroke="#33332f" strokeWidth="3" />
      <g clipPath="url(#inBody)">
        <path d="M275 205 820 200 1040 340V560L1030 870 985 965H940L900 400 200 300 65 432z" fill="#6b6a63" />
        <path d="M100 320 165 266 200 300 80 430z" fill="#72716a" />
        <path d={FRONT} fill="url(#bag)" />
        <g filter="url(#soft)">
          {shades.map(([d, fill, opacity]) => (
            <path key={d} d={d} fill={fill} opacity={opacity} />
          ))}
        </g>
        <path d="M205 1013Q215 993 260 990 335 995 400 1040L425 1048Q310 1070 205 1013zM600 1062Q640 1030 700 1012 770 1002 830 1008L880 1000 937 985V1010L820 1070z" fill="#282925" />
        <path d="M222 1000 280 1050M660 1020 690 1060M740 1008 690 1060M830 1008 800 1068" stroke="#111" strokeWidth="2" />
        <path d={FRONT} fill="none" stroke="#2a2a27" strokeWidth="2.2" />
        <path d={seams} fill="none" stroke="#1f1f1c" strokeWidth="1.9" strokeOpacity="0.85" strokeLinejoin="round" />
      </g>

      {/* neck and rim */}
      <path d="M240 165 290 240Q370 240 445 255L475 290H583L600 285Q690 265 785 258L835 185 640 190 440 185z" fill="url(#neck)" />
      <path d="M420 190 470 225 475 290 583 290 590 240 640 195z" fill="#5c5a54" />
      <path d="M475 240 475 290M583 290V245M690 205 687 270M450 258Q440 220 445 210" stroke="#222" strokeWidth="2" fill="none" />
      <path d="M262 92Q262 74 300 70 380 62 465 68 490 45 565 35 640 38 672 74L740 80Q850 76 860 102 858 122 815 158L760 150 715 190H640Q590 225 535 228 470 225 420 187H375L325 127Q268 108 262 92z" fill="url(#rim)" stroke="#2b2a27" strokeWidth="3" />
      <path d="M262 92Q270 76 300 73 380 67 465 71 490 50 565 39 635 42 668 76L740 83Q840 82 857 102" fill="none" stroke="#a39a8d" strokeWidth="3" />
      <g filter="url(#edge)">
        <path d="M340 130Q400 160 470 125L510 180 495 215 420 188H375z" fill="#3b3b37" opacity="0.75" />
        <path d="M625 115Q680 170 765 130L715 190H625z" fill="#4d4d49" opacity="0.75" />
        <path d="M425 115Q455 115 465 130 440 145 420 130zM680 125Q700 115 720 135 700 150 680 140zM565 85Q572 85 575 115 565 120 562 105z" fill="#c8c5bd" opacity="0.8" />
        <path d="M470 75Q500 60 520 65L510 130 490 150zM600 60 640 55 600 130z" fill="#45453f" opacity="0.6" />
        <path d="M640 85Q665 80 665 88 630 105 625 140L612 130z" fill="#89908c" opacity="0.8" />
      </g>
      <path d="M505 210Q530 140 575 133 605 140 615 190L590 215 535 225z" fill="#55534e" stroke="#222" strokeWidth="2" />
      <path d="M535 220Q560 185 620 200M590 140Q615 165 612 190M615 180H710M410 70 404 178M345 155 404 165M660 65Q600 130 617 185M737 80 722 165M737 108H820M725 138 770 140" fill="none" stroke="#222" strokeWidth="2" />
      <path d="M240 165Q248 138 325 127L355 155 378 186H420L410 195H265Q245 185 240 165zM835 180Q835 155 768 147L740 165 715 193 770 203Q825 200 835 180z" fill="#77736a" stroke="#2b2a27" strokeWidth="3" />
      <path d="M288 142 308 178M325 127 375 180M775 150 745 190M800 160 765 190" stroke="#222" strokeWidth="2" />
      <path d="M240 165Q245 183 290 184L425 186Q450 215 490 220 560 230 605 214L640 193 715 195Q820 198 835 180 835 200 790 205L640 203Q590 235 540 235 470 232 420 194L290 192Q240 190 240 165z" fill="#a0978a" stroke="#2b2a27" strokeWidth="2.5" />

      {/* stitches */}
      <Loop x={473} y={545} h={145} />
      <Loop x={473} y={902} h={125} />
      <path d="M455 632l12-6-4 18zM530 625l12 4-8 8zM453 965l10 2-3 12zM530 967l8 4-6 6z" fill="#e6ddd0" />
      <g stroke="#22211f" strokeWidth="2.5">
        <path d="M948 480Q965 470 985 480L990 610 975 622 966 545 960 495z" fill="#777770" />
        <path d="M985 540 1000 560 988 580M950 580 970 570M960 640Q985 610 1005 645L990 665 965 655z" fill="#64645d" />
        <path d="M945 900Q950 835 985 830L983 965 960 965 945 930z" fill="#73746d" />
        <path d="M935 885Q945 820 985 795L1005 840M985 900 1010 880 1000 940 985 960" fill="none" />
        <path d="M65 450 85 455 80 545 95 540 75 625 62 600M62 770 90 805 75 830 55 800M65 880 90 885 88 935" fill="#5d5d57" />
      </g>

      {/* sketch points */}
      <g fill="#fff" fillOpacity="0.85" stroke="#9a9a9a" strokeWidth="4">
        <circle cx="162" cy="1039" r="11" />
        <circle cx="937" cy="1039" r="11" />
        <circle cx="162" cy="1265" r="11" />
        <circle cx="937" cy="1265" r="11" />
        <circle cx="254" cy="1295" r="11" />
        <circle cx="820" cy="1322" r="11" />
      </g>
      <circle cx="549" cy="1152" r="12" fill="#40394a" />
      <circle cx="549" cy="1152" r="5" fill="#241d27" />
      <circle cx="573" cy="1166" r="10" fill="#b9b9b0" />
    </g>
  );
}

function ViewCube() {
  return (
    <svg viewBox="0 0 116 100" className="absolute right-0 top-[9px] w-[116px] h-[100px]" role="img" aria-label="View cube">
      <defs>
        <filter id="cubeShadow" x="-30%" y="-100%" width="160%" height="300%">
          <feGaussianBlur stdDeviation="4" />
        </filter>
      </defs>
      <ellipse cx="57" cy="81" rx="30" ry="6" fill="#9a9a9a" opacity="0.7" filter="url(#cubeShadow)" />
      <path d="M32 34 38 25H77L82 34V80H32z" fill="#f1f1f2" />
      <path d="M32 34H82V80H32z" fill="#ebecee" stroke="#d2d2d2" strokeDasharray="9 2" />
      <path d="M32 34 38 25H77L82 34" fill="#f4f4f4" stroke="#d2d2d2" strokeDasharray="9 2" />
      <path d="M42 43H72V72H42z" fill="#e1e4e8" />
      <g fontFamily="Roboto, sans-serif" textAnchor="middle">
        <text x="57" y="62" fontSize="11" fontWeight="700" fill="#8d949b">FRONT</text>
        <text x="57" y="32" fontSize="6" fontWeight="700" fill="#a2a5a9">TOP</text>
        <text x="30" y="24" fontSize="14" fill="#7e7efa">Z</text>
        <text x="95" y="86" fontSize="13" fill="#fa7878">X</text>
      </g>
      <path d="M31 26 32.5 81" stroke="#8585f5" strokeWidth="1.5" />
      <path d="M33 81.5H88" stroke="#f08080" />
    </svg>
  );
}

function Viewport() {
  return (
    <div className="absolute inset-0">
      <svg viewBox="0 81 1366 687" preserveAspectRatio="xMidYMid slice" className="w-full h-full" role="img" aria-label="Lamp shade on base box">
        <Ground />
        <Bag />
        <g stroke="#294776" strokeWidth="4" strokeLinecap="round">
          <path d="M526 626H538M526 682.5H538M532.5 627V682" />
        </g>
        <g fill="#294776">
          <path d="M1036 587Q1042 586 1041 592 1023 634 984 650 951 661 902 650L901 643Q950 656 988 638 1022 622 1036 587z" />
          <path d="M922 623Q922 634 903 643L900 651 912 660Q914 666 909 665 896 661 886 650 884 642 889 639 907 636 922 623z" />
        </g>
      </svg>
      <div className="absolute left-[950px] top-[403px] w-[248px] h-[85px] rounded-md bg-[#5ce1e6] text-black text-center font-bold text-[34px] leading-[38px] pt-1 pl-[2px] font-[Roboto,sans-serif]">
        Extruding the
        <br />
        <span className="pl-2">base box</span>
      </div>
      <div className="absolute left-[429px] top-[560px] text-[26px] leading-8 font-bold text-[#294776] whitespace-nowrap font-[Roboto,sans-serif]">
        42 mm
      </div>
      <ViewCube />
    </div>
  );
}

const navTools = [
  ['Orbit', true, (
    <path d="M24 3V44M18 10 24 2 30 10M3 27Q24 12 45 27 24 42 3 27zM12 18V34M34 18V34" fill="none" stroke="#5b626c" strokeWidth="3" />
  )],
  ['Look At', false, (
    <path d="M4 15 14 8H44V44H4zM14 8V3H36V8M4 19H44M4 28H44" fill="#9aa1aa" stroke="#666" strokeWidth="2" />
  )],
  ['Pan', false, (
    <path d="M14 42 3 25Q8 19 15 29L11 8Q16 3 20 22L20 4Q25 0 27 21L31 6Q36 3 34 25L40 14Q46 13 36 42z" fill="#fff" stroke="#666" strokeWidth="2.5" />
  )],
  ['Zoom', false, (
    <g fill="none" stroke="#777" strokeWidth="3">
      <circle cx="19" cy="20" r="15" fill="#e8f4f5" />
      <path d="M29 31 42 45M36 10H46M41 5V15M36 22H46" stroke="#555" />
    </g>
  )],
  ['Fit', true, (
    <g fill="none" stroke="#777" strokeWidth="3">
      <path d="M3 3H45V44H3z" strokeDasharray="4 4" strokeWidth="2" />
      <circle cx="22" cy="20" r="14" fill="#e8f4f5" />
      <path d="M32 30 44 44" stroke="#555" />
    </g>
  )],
  ['Display Settings', true, (
    <path d="M3 4H45V34H3zM16 42H32" fill="#78a8db" stroke="#687382" strokeWidth="4" />
  )],
  ['Grid and Snaps', true, (
    <path d="M3 3H45V45H3zM3 11H45M3 19H45M3 27H45M3 35H45M11 3V45M19 3V45M27 3V45M35 3V45" fill="#eee" stroke="#777" strokeWidth="2" />
  )],
  ['Viewports', true, (
    <path d="M3 5H23V23H3zM26 5H46V23H26zM3 27H23V45H3zM26 27H46V45H26z" fill="#78a8db" stroke="#59779b" strokeWidth="3" />
  )],
];

function BottomBar() {
  return (
    <footer className="relative grid grid-cols-[1fr_auto_1fr] h-[15px] overflow-hidden">
      <div className="ml-1 mt-[2px] w-[278px] h-5 bg-[#f1f1f1] border-t border-[#d8d8d8] border-r-2 border-r-[#c2c2c2] flex items-center pl-[23px] pr-[10px] text-[11px] leading-3 text-[#555] font-[Lato,sans-serif] font-medium">
        <span className="flex-1">COMMENTS</span>
        <Minus />
      </div>
      <div className="h-7 bg-[#efefef] flex items-start px-[3px] pt-1">
        {navTools.map(([label, menu, art]) => (
          <button key={label} type="button" aria-label={label} className={menu ? 'flex items-center mr-[5px] last:mr-0' : 'flex items-center mr-2'}>
            <svg viewBox="0 0 48 48" className="w-4 h-4">{art}</svg>
            {menu && <Caret className="ml-[2px]" />}
          </button>
        ))}
      </div>
    </footer>
  );
}

export default function App() {
  return (
    <div className="h-screen flex flex-col overflow-hidden bg-white">
      <Toolbar />
      <main className="relative flex-1 min-h-0 flex flex-col justify-between overflow-hidden">
        <Viewport />
        <div className="relative">
          <Browser />
        </div>
        <BottomBar />
      </main>
    </div>
  );
}
